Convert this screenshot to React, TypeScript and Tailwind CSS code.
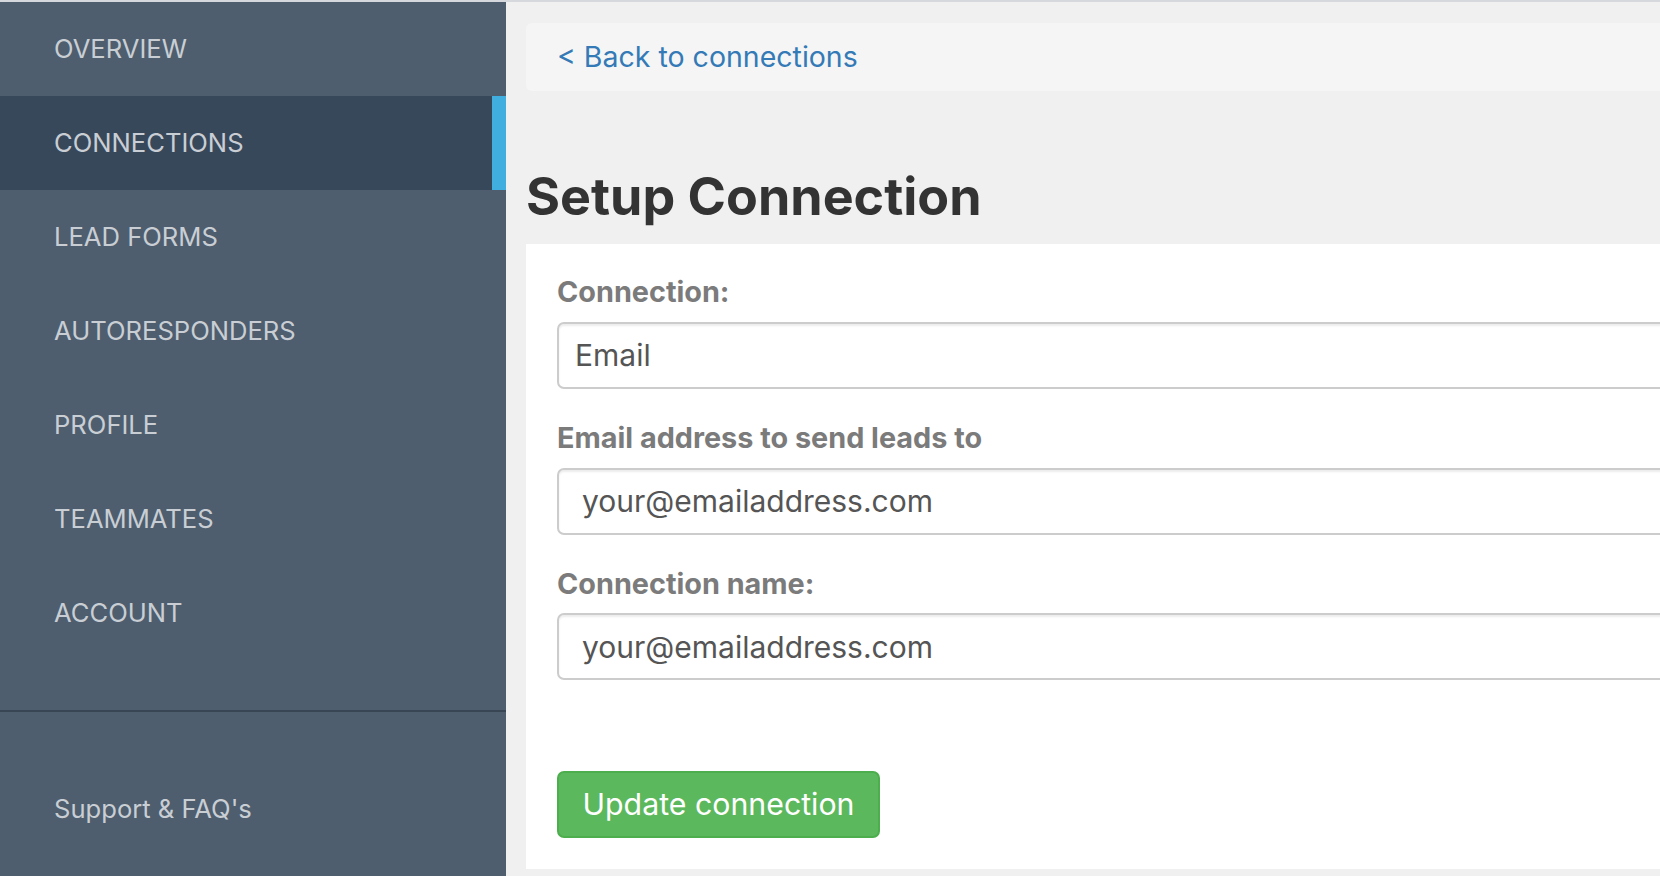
const navItems = [
  'OVERVIEW',
  'CONNECTIONS',
  'LEAD FORMS',
  'AUTORESPONDERS',
  'PROFILE',
  'TEAMMATES',
  'ACCOUNT',
]

const font = { fontFamily: 'Inter, "Noto Sans", sans-serif' }

function Sidebar() {
  return (
    <aside className="flex w-[506px] shrink-0 flex-col bg-[#4e5e6f]">
      {navItems.map((item) => (
        <a
          key={item}
          href="#"
          className={
            'flex h-[94px] shrink-0 items-center pl-[54px] text-[25.6px] text-[#c9ced4] ' +
            (item === 'CONNECTIONS'
              ? 'border-r-[14px] border-[#40aede] bg-[#38485b]'
              : '')
          }
        >
          {item}
        </a>
      ))}
      <div className="mt-[50px] h-[2px] shrink-0 bg-[#384552]" />
      <a
        href="#"
        className="flex h-[194px] shrink-0 items-center pl-[54px] text-[25.6px] text-[#c9ced4]"
      >
        Support &amp; FAQ's
      </a>
    </aside>
  )
}

function Field({
  label,
  value,
  pad,
}: {
  label: string
  value: string
  pad: string
}) {
  return (
    <div className="mb-[35px]">
      <label className="mb-[15px] block text-[28.8px] leading-none font-bold text-[#7b7b7b]">
        {label}
      </label>
      <input
        readOnly
        value={value}
        className={
          'h-[67px] w-full rounded-[7px] border-2 border-[#cccccc] bg-white text-[30px] text-[#555555] shadow-[inset_0_2px_2px_rgba(0,0,0,0.075)] outline-none ' +
          pad
        }
      />
    </div>
  )
}

export default function App() {
  return (
    <div
      className="flex h-screen flex-col overflow-hidden border-t-2 border-[#d5d9de]"
      style={font}
    >
      <div className="flex flex-1 overflow-hidden">
        <Sidebar />
        <main className="flex-1 overflow-hidden bg-[#f0f0f0] pl-5">
          <div className="w-[1200px]">
            <div className="mt-[21px] flex h-[68px] items-center rounded-md bg-[#f5f5f5] pl-[31px]">
              <a href="#" className="text-[28.5px] text-[#337ab7]">
                &lt; Back to connections
              </a>
            </div>
            <h1 className="mt-[80px] mb-[21px] text-[52px] leading-none font-bold text-[#333333]">
              Setup Connection
            </h1>
            <div className="bg-white pt-[34px] pb-[31px] pl-[31px]">
              <Field label="Connection:" value="Email" pad="pl-[16px]" />
              <Field
                label="Email address to send leads to"
                value="your@emailaddress.com"
                pad="pl-[23px]"
              />
              <Field
                label="Connection name:"
                value="your@emailaddress.com"
                pad="pl-[23px]"
              />
              <button className="mt-[91px] flex h-[67px] w-[323px] items-center justify-center rounded-[7px] border-2 border-[#4cae4c] bg-[#5cb85c] text-[30.3px] text-white">
                Update connection
              </button>
            </div>
          </div>
        </main>
      </div>
    </div>
  )
}
